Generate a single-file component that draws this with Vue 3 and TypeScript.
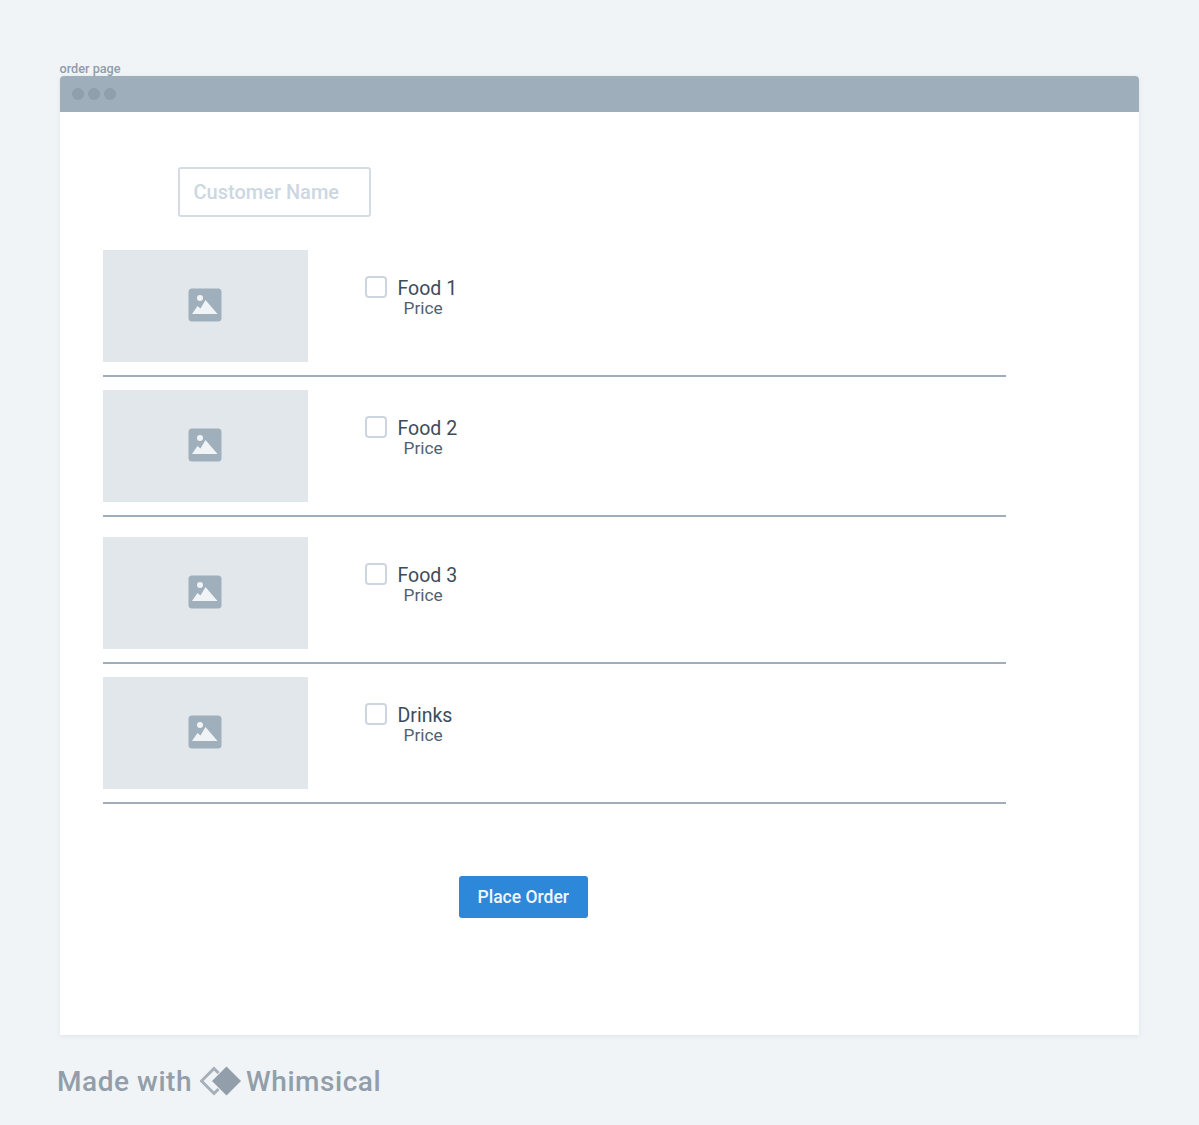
<script setup lang="ts">
interface Item { name: string; roomy: boolean }
const items: Item[] = [
  { name: 'Food 1', roomy: false },
  { name: 'Food 2', roomy: false },
  { name: 'Food 3', roomy: true },
  { name: 'Drinks', roomy: false },
]
</script>

<template>
  <div class="page">
    <div class="label">order page</div>
    <section class="window">
      <header class="bar">
        <i class="dot"></i><i class="dot"></i><i class="dot"></i>
      </header>
      <div class="content">
        <div class="input">Customer Name</div>
        <div class="list">
          <article v-for="item in items" :key="item.name" class="row" :class="{ roomy: item.roomy }">
            <div class="main">
              <div class="thumb">
                <svg width="34" height="34" viewBox="0 0 34 34" aria-hidden="true">
                  <rect x="0.5" y="0.5" width="33" height="33" rx="3.5" fill="#9fafbc" />
                  <circle cx="12" cy="10" r="3" fill="#f1f4f6" />
                  <path d="M4 26 L9.5 18 L12.5 20.5 L17.5 12 L29.5 26 Z" fill="#f1f4f6" />
                </svg>
              </div>
              <div class="check"></div>
              <div class="text">
                <div class="name">{{ item.name }}</div>
                <div class="price">Price</div>
              </div>
            </div>
            <div class="rule"></div>
          </article>
        </div>
        <button class="order" type="button">Place Order</button>
      </div>
    </section>
    <footer class="made">
      <span>Made with</span>
      <svg class="logo" width="42" height="32" viewBox="0 0 42 32" aria-hidden="true">
        <path d="M14 3.5 L1.5 16 L14 28.5 L26.5 16 Z" fill="none" stroke="#a6b0ba" stroke-width="3" />
        <path d="M26.5 1.5 L41 16 L26.5 30.5 L12 16 Z" fill="#929ea9" stroke="#f0f4f7" stroke-width="2" paint-order="stroke" />
      </svg>
      <span>Whimsical</span>
    </footer>
  </div>
</template>

<style>
html, body { margin: 0; background: #f0f4f7; }
</style>

<style scoped>
.page {
  box-sizing: border-box;
  height: 1125px;
  padding: 61px 60px 0 59.5px;
  font-family: Roboto, "Liberation Sans", sans-serif;
  background: #f0f4f7;
  overflow: hidden;
}
.label {
  height: 15px;
  font-size: 12.7px;
  line-height: 15px;
  font-weight: 500;
  color: #8f9ca8;
}
.window {
  width: 1079.5px;
  height: 959px;
  background: #fff;
  border-radius: 4px 4px 0 0;
  box-shadow: 0 1px 5px rgba(120, 140, 160, 0.14);
}
.bar {
  height: 35.5px;
  display: flex;
  align-items: center;
  gap: 4px;
  padding-left: 12px;
  background: #9eaeba;
  border-radius: 4px 4px 0 0;
}
.dot {
  width: 12px;
  height: 12px;
  border-radius: 50%;
  background: #8e9fad;
}
.content {
  display: flex;
  flex-direction: column;
  padding: 55.5px 133px 0 43px;
}
.input {
  box-sizing: border-box;
  width: 193.5px;
  height: 50px;
  margin-left: 75px;
  padding-left: 14px;
  display: flex;
  align-items: center;
  border: 2px solid #d3dbe4;
  border-radius: 3px;
  font-size: 20px;
  font-weight: 500;
  color: #ccd7e2;
}
.list {
  margin-top: 33px;
}
.row + .row {
  margin-top: 13px;
}
.row.roomy {
  margin-top: 20px;
}
.main {
  display: flex;
  align-items: flex-start;
}
.thumb {
  box-sizing: border-box;
  width: 205.5px;
  height: 111.5px;
  margin-bottom: 0.5px;
  padding-bottom: 1px;
  display: flex;
  align-items: center;
  justify-content: center;
  background: #e2e7ec;
}
.check {
  box-sizing: border-box;
  width: 22px;
  height: 22px;
  margin: 26px 0 0 56.5px;
  border: 2px solid #cdd6e0;
  border-radius: 4px;
}
.text {
  margin: 27px 0 0 11px;
}
.name {
  font-size: 19.5px;
  line-height: 24px;
  color: #3d4c5a;
  white-space: nowrap;
}
.price {
  margin: -1px 0 0 6px;
  font-size: 17.3px;
  line-height: 17px;
  color: #52616f;
}
.rule {
  height: 2px;
  margin-top: 13px;
  background: #9eaeba;
}
.order {
  align-self: flex-start;
  width: 129.5px;
  height: 42px;
  margin: 72px 0 0 356px;
  padding: 0;
  border: 0;
  border-radius: 3px;
  background: #2d88da;
  color: #f1f7fd;
  font-family: inherit;
  font-size: 17.5px;
  font-weight: 500;
}
.made {
  display: flex;
  align-items: center;
  height: 32px;
  margin: 30px 0 0 -2.5px;
  font-size: 28px;
  font-weight: 500;
  color: #929ea9;
  letter-spacing: 0.55px;
}
.logo {
  margin: 0 4px 0 8px;
}
</style>
